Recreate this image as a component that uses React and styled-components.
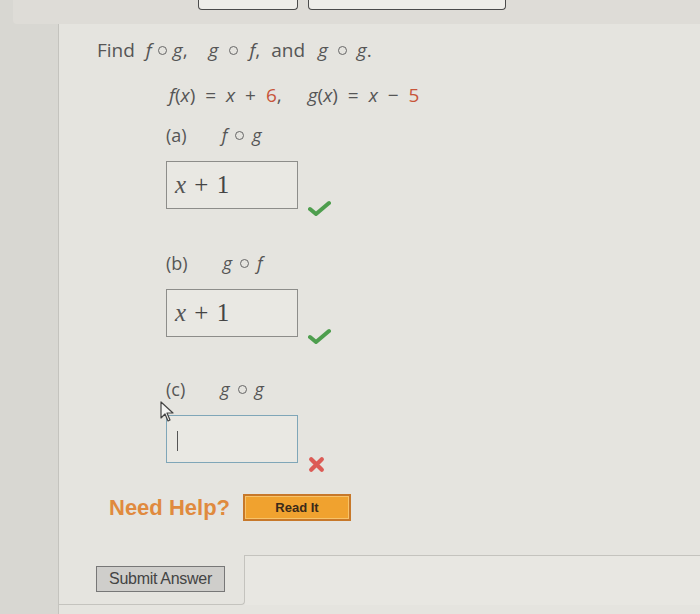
import React from "react";
import styled, { createGlobalStyle } from "styled-components";

const Global = createGlobalStyle`
  html, body {
    margin: 0;
    padding: 0;
    background: #d8d7d2;
  }
  #root {
    width: 700px;
    height: 614px;
    overflow: hidden;
  }
`;

const Page = styled.div`
  width: 700px;
  height: 614px;
  background: #d8d7d2;
  display: flex;
  flex-direction: column;
  font-family: "Open Sans", "DejaVu Sans", sans-serif;
`;

const TopBand = styled.div`
  height: 24px;
  margin-left: 13px;
  background: #dedcd7;
  border-bottom-left-radius: 4px;
  display: flex;
  gap: 10px;
  padding-left: 185px;
  box-sizing: border-box;
`;

const Tab = styled.div`
  width: ${(p) => p.$w}px;
  height: 9px;
  border: 1px solid #4b4b4b;
  border-top: none;
  border-bottom-left-radius: 4px;
  border-bottom-right-radius: 4px;
  background: #eeede9;
`;

const Panel = styled.div`
  flex: 1;
  margin-left: 58px;
  border-left: 1px solid #c4c3be;
  background: #e5e4df;
  display: flex;
  flex-direction: column;
`;

const Content = styled.div`
  flex: 1;
  padding: 13px 0 0 38px;
  color: #565656;
`;

const Question = styled.div`
  font-size: 19px;
  word-spacing: 6px;
`;

const Math = styled.span`
  font-style: italic;
  color: #555;
  word-spacing: 0;
  margin-left: ${(p) => p.$ml || 0}px;
`;

const Ring = styled.span`
  display: inline-block;
  width: 7px;
  height: 7px;
  border: 1.4px solid #666;
  border-radius: 50%;
  margin: 0 ${(p) => p.$m || 8}px;
  vertical-align: 2px;
`;

const Red = styled.span`
  color: #c8553a;
`;

const Block = styled.div`
  padding-left: 73px;
`;

const Functions = styled.div`
  font-size: 19px;
  margin-top: 19px;
  margin-left: -1px;
  display: flex;
  gap: 26px;
  word-spacing: 5px;
`;

const PartLabel = styled.div`
  font-size: 18px;
  margin-top: ${(p) => p.$top}px;
  margin-left: -4px;
  display: flex;
  gap: 35px;
`;

const AnswerRow = styled.div`
  display: flex;
  align-items: flex-end;
  margin-top: 14px;
  margin-left: -4px;
  gap: 10px;
  position: relative;
`;

const AnswerBox = styled.div`
  width: 132px;
  height: 48px;
  border: 1px solid ${(p) => (p.$active ? "#7fa6b8" : "#8d8d8a")};
  background: #e9e8e3;
  box-sizing: border-box;
  display: flex;
  align-items: center;
  padding-left: 8px;
  font-family: "Liberation Serif", "DejaVu Serif", serif;
  font-size: 25px;
  color: #444;
  word-spacing: 2px;
`;

const Caret = styled.div`
  width: 1px;
  height: 20px;
  background: #555;
  margin-left: 2px;
  margin-top: 4px;
`;

const Mark = styled.svg`
  margin-bottom: ${(p) => p.$mb}px;
`;

const Cursor = styled.svg`
  position: absolute;
  left: -6px;
  top: -14px;
`;

const HelpRow = styled.div`
  display: flex;
  align-items: center;
  margin-top: 31px;
  margin-left: 12px;
  gap: 13px;
`;

const HelpText = styled.div`
  font-family: "Liberation Sans", Arial, sans-serif;
  font-weight: bold;
  font-size: 22px;
  color: #e08a3e;
`;

const ReadIt = styled.button`
  width: 108px;
  height: 27px;
  background: #f0a22f;
  border: 2px solid #c7782a;
  box-shadow: inset 0 0 0 1px #f7c36a;
  font-family: "Liberation Sans", Arial, sans-serif;
  font-weight: bold;
  font-size: 13px;
  color: #3a2a1a;
  padding: 0;
`;

const Footer = styled.div`
  height: 50px;
  display: flex;
  margin-bottom: 9px;
`;

const SubmitCell = styled.div`
  width: 186px;
  border-bottom: 1px solid #c4c3be;
  border-right: 1px solid #c4c3be;
  border-bottom-right-radius: 4px;
  display: flex;
  align-items: flex-end;
  padding: 0 0 12px 37px;
  box-sizing: border-box;
`;

const RightCell = styled.div`
  flex: 1;
  border-top: 1px solid #c4c3be;
  background: #e8e7e2;
`;

const SubmitButton = styled.button`
  width: 129px;
  height: 26px;
  background: #cfcecb;
  border: 1px solid #777;
  font-family: "Liberation Sans", Arial, sans-serif;
  font-size: 16px;
  letter-spacing: -0.3px;
  color: #444;
  padding: 0;
`;

const Check = ({ mb }) => (
  <Mark $mb={mb} width="23" height="17" viewBox="0 0 23 17">
    <path d="M2 9 L8 14 L21 3" fill="none" stroke="#4e9e4e" strokeWidth="4" strokeLinecap="round" strokeLinejoin="round" />
  </Mark>
);

const Cross = () => (
  <Mark $mb={-10} width="17" height="17" viewBox="0 0 16 16">
    <path d="M3 3 L13 13 M13 3 L3 13" stroke="#dc5b55" strokeWidth="4" strokeLinecap="round" />
  </Mark>
);

const Compose = ({ a, b, m, ml }) => (
  <Math $ml={ml}>
    {a}
    <Ring $m={m} />
    {b}
  </Math>
);

export default function App() {
  return (
    <Page>
      <Global />
      <TopBand>
        <Tab $w={98} />
        <Tab $w={196} />
      </TopBand>
      <Panel>
        <Content>
          <Question>
            Find <Compose a="f" b="g" m={6} />, <Compose a="g" b="f" m={11} ml={10} />, and{" "}
            <Compose a="g" b="g" m={10} ml={2} />.
          </Question>
          <Block>
            <Functions>
              <span>
                <Math>f</Math>(<Math>x</Math>) = <Math>x</Math> + <Red>6</Red>,
              </span>
              <span>
                <Math>g</Math>(<Math>x</Math>) = <Math>x</Math> − <Red>5</Red>
              </span>
            </Functions>
            <PartLabel $top={15}>
              <span>(a)</span>
              <Compose a="f" b="g" />
            </PartLabel>
            <AnswerRow>
              <AnswerBox>
                <Math>x</Math>&nbsp;+&nbsp;1
              </AnswerBox>
              <Check mb={-8} />
            </AnswerRow>
            <PartLabel $top={42}>
              <span>(b)</span>
              <Compose a="g" b="f" />
            </PartLabel>
            <AnswerRow>
              <AnswerBox>
                <Math>x</Math>&nbsp;+&nbsp;1
              </AnswerBox>
              <Check mb={-8} />
            </AnswerRow>
            <PartLabel $top={40}>
              <span>(c)</span>
              <Compose a="g" b="g" />
            </PartLabel>
            <AnswerRow>
              <AnswerBox $active>
                <Caret />
              </AnswerBox>
              <Cross />
              <Cursor width="16" height="22" viewBox="0 0 16 22">
                <path d="M1 1 L1 17 L5 13 L8 20 L10 19 L7 12 L13 12 Z" fill="#f4f4f2" stroke="#444" strokeWidth="1.2" strokeLinejoin="round" />
              </Cursor>
            </AnswerRow>
          </Block>
          <HelpRow>
            <HelpText>Need Help?</HelpText>
            <ReadIt>Read It</ReadIt>
          </HelpRow>
        </Content>
        <Footer>
          <SubmitCell>
            <SubmitButton>Submit Answer</SubmitButton>
          </SubmitCell>
          <RightCell />
        </Footer>
      </Panel>
    </Page>
  );
}
